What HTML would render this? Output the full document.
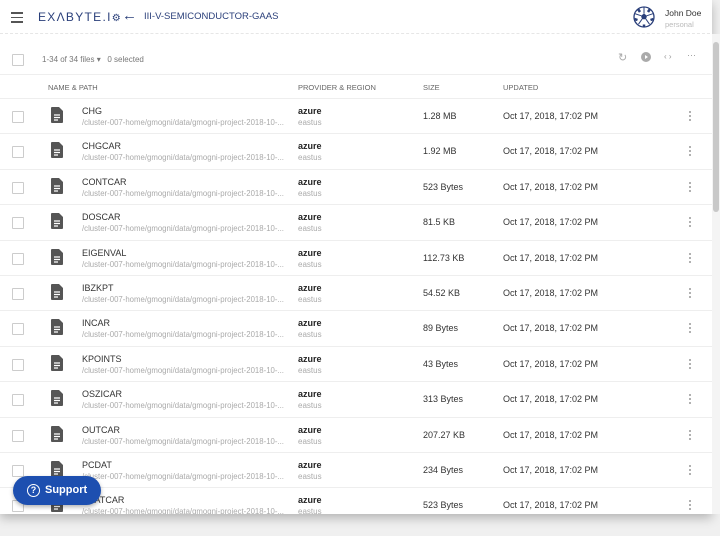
<!DOCTYPE html>
<html><head><style>
*{box-sizing:border-box;margin:0;padding:0}
body{width:720px;height:536px;overflow:hidden;background:#f0f0f0;font-family:"Liberation Sans",sans-serif;position:relative}
.panel{position:absolute;left:0;top:0;width:712px;height:514px;background:#fff;box-shadow:0 4px 10px rgba(0,0,0,.25);overflow:hidden}
.hdr{position:absolute;left:0;top:0;width:720px;height:34px;background:#fff;border-bottom:1px dashed #e6e6e6}
.sb{position:absolute;left:712px;top:34px;width:8px;height:480px;background:#f4f4f4}
.sb div{position:absolute;left:1px;top:8px;width:6px;height:170px;background:#c8c8c8;border-radius:3px}
.cb{position:absolute;left:12px;width:12px;height:12px;border:1px solid #ccc;border-radius:1px}
.row{position:absolute;left:0;width:712px;height:35.4px;border-top:1px solid #eee}
.t{position:absolute;white-space:nowrap}
.nm{left:82px;top:7px;font-size:9px;color:#333}
.pa{left:82px;top:19px;font-size:7.8px;color:#aaa}
.pr{left:298px;top:7px;font-size:9px;color:#222;font-weight:bold}
.rg{left:298px;top:19px;font-size:8px;color:#aaa}
.sz{left:423px;top:12px;font-size:9px;color:#333}
.up{left:503px;top:12px;font-size:9px;color:#333}
.mn{left:689px;top:12px;width:4px}
.mn i{display:block;width:2px;height:2px;background:#999;border-radius:1px;margin:0 0 2px 0}
.ic{position:absolute;left:51px;top:8px}
.th{font-size:7.5px;color:#666;top:83px}
</style></head><body>
<div class="panel">
<div class="hdr">
 <div style="position:absolute;left:11px;top:12px;width:12px"><div style="height:1.5px;background:#555;margin-bottom:3px"></div><div style="height:1.5px;background:#555;margin-bottom:3px"></div><div style="height:1.5px;background:#555"></div></div>
 <div class="t" style="left:38px;top:10px;font-size:12px;color:#2a3f7a;letter-spacing:1.3px">EXΛBYTE.I<span style="font-size:10px">⚙</span></div>
 <div class="t" style="left:122px;top:7px;font-size:15px;color:#2a3f7a">←</div>
 <div class="t" style="left:144px;top:11px;font-size:9.5px;color:#2a3f7a">III-V-SEMICONDUCTOR-GAAS</div>
 <svg style="position:absolute;left:633px;top:6px" width="22" height="22" viewBox="0 0 22 22"><circle cx="11" cy="11" r="10" fill="#fff" stroke="#2a3f7a" stroke-width="1.3"/><polygon points="11,7.5 14,9.7 13,13.2 9,13.2 8,9.7" fill="#2a3f7a"/><path d="M11 1.5v6M14 9.7l6-2M13 13.2l3.5 5M9 13.2l-3.5 5M8 9.7l-6-2" stroke="#2a3f7a" stroke-width="1"/><path d="M5 3l2 3M17 3l-2 3M1.5 13l3 1M20.5 13l-3 1M11 20.5v-2" stroke="#2a3f7a" stroke-width="2.5"/></svg>
 <div class="t" style="left:665px;top:8px;font-size:8.5px;color:#333">John Doe</div>
 <div class="t" style="left:665px;top:20px;font-size:7.5px;color:#bbb">personal</div>
</div>
<div class="cb" style="top:54px"></div>
<div class="t" style="left:42px;top:55px;font-size:8px;color:#777">1-34 of 34 files ▾ &nbsp;&nbsp;0 selected</div>
<div class="t" style="left:618px;top:51px;font-size:11px;color:#aaa">↻</div>
<div style="position:absolute;left:641px;top:52px;width:10px;height:10px;border-radius:50%;background:#aaa"><div style="position:absolute;left:4px;top:2.5px;border-left:3.5px solid #fff;border-top:2.5px solid transparent;border-bottom:2.5px solid transparent"></div></div>
<div class="t" style="left:664px;top:52px;font-size:8px;color:#999">‹ ›</div>
<div class="t" style="left:687px;top:50px;font-size:9px;color:#999">···</div>
<div style="position:absolute;left:0;top:74px;width:712px;border-top:1px solid #eee"></div>
<div class="t th" style="left:48px">NAME &amp; PATH</div>
<div class="t th" style="left:298px">PROVIDER &amp; REGION</div>
<div class="t th" style="left:423px">SIZE</div>
<div class="t th" style="left:503px">UPDATED</div>
<div id="rows"></div>
<div style="position:absolute;left:13px;top:476px;width:88px;height:29px;border-radius:15px;background:#1d4fb0;box-shadow:0 2px 4px rgba(0,0,0,.3)">
 <div style="position:absolute;left:14px;top:8px;width:13px;height:13px;border:1.3px solid #fff;border-radius:50%;color:#fff;font-size:9px;font-weight:bold;text-align:center;line-height:11px">?</div>
 <div class="t" style="left:32px;top:8px;color:#fff;font-size:11px;font-weight:bold">Support</div>
</div>
</div>
<div class="sb"><div></div></div>
<script>
var d=[["CHG","1.28 MB"],["CHGCAR","1.92 MB"],["CONTCAR","523 Bytes"],["DOSCAR","81.5 KB"],["EIGENVAL","112.73 KB"],["IBZKPT","54.52 KB"],["INCAR","89 Bytes"],["KPOINTS","43 Bytes"],["OSZICAR","313 Bytes"],["OUTCAR","207.27 KB"],["PCDAT","234 Bytes"],["XDATCAR","523 Bytes"]];
var h="";d.forEach(function(r,i){var top=98+i*35.4;
h+='<div class="row" style="top:'+top+'px"><div class="cb" style="top:12px"></div><svg class="ic" width="12" height="16" viewBox="0 0 12 16"><path d="M1 0h7l4 4v11a1 1 0 0 1-1 1H1a1 1 0 0 1-1-1V1a1 1 0 0 1 1-1z" fill="#555"/><path d="M3 8h6M3 10.5h6M3 13h4" stroke="#fff" stroke-width="1.2"/></svg><div class="t nm">'+r[0]+'</div><div class="t pa">/cluster-007-home/gmogni/data/gmogni-project-2018-10-...</div><div class="t pr">azure</div><div class="t rg">eastus</div><div class="t sz">'+r[1]+'</div><div class="t up">Oct 17, 2018, 17:02 PM</div><div class="t mn"><i></i><i></i><i></i></div></div>';});
document.getElementById("rows").innerHTML=h;
</script>
</body></html>
